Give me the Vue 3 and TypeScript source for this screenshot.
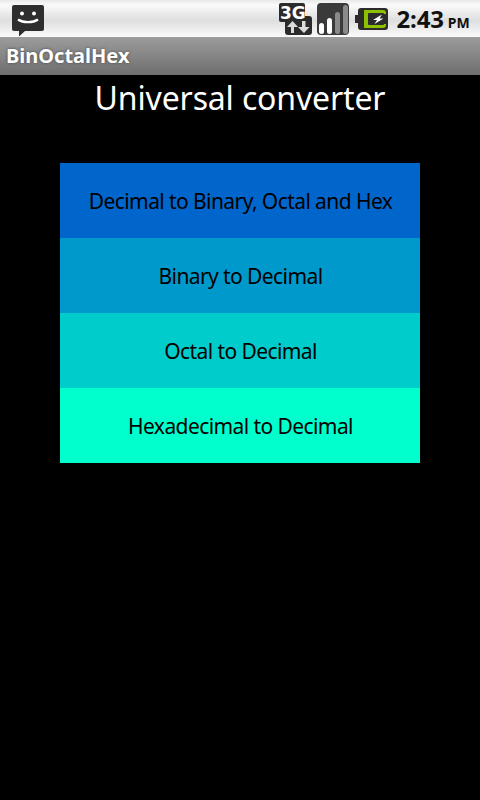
<script setup lang="ts">
const rows = [
  { label: 'Decimal to Binary, Octal and Hex', color: '#0066cc' },
  { label: 'Binary to Decimal', color: '#0099cc' },
  { label: 'Octal to Decimal', color: '#00cccc' },
  { label: 'Hexadecimal to Decimal', color: '#00ffcc' },
]
</script>

<template>
  <div class="screen">
    <header class="status">
      <svg class="smile" width="34" height="36" viewBox="0 0 34 36">
        <path d="M3 4h28a2 2 0 0 1 2 2v22a2 2 0 0 1-2 2H14l-6 5.500V30H3a2 2 0 0 1-2-2V6a2 2 0 0 1 2-2z" fill="#2e2e2e" />
        <circle cx="11" cy="12.500" r="2" fill="#fff" />
        <circle cx="23" cy="12.500" r="2" fill="#fff" />
        <path d="M7 18.500c5 3.500 15 3.500 20 0" fill="none" stroke="#fff" stroke-width="2.400" />
      </svg>
      <div class="spacer"></div>
      <svg class="net" width="33" height="34" viewBox="0 0 33 34">
        <rect x="6" y="14" width="27" height="19" rx="3" fill="#2b2b2b" />
        <rect x="0" y="1" width="26" height="19" rx="2" fill="#2b2b2b" />
        <text x="1" y="17" class="net-label">3G</text>
        <path d="M12 31v-6H8l5.500-6 5.500 6h-4v6zM23 19h3.500v6h4L25 31l-6-6h4z" fill="#dcdcdc" />
      </svg>
      <svg class="bars" width="32" height="32" viewBox="0 0 32 32">
        <rect width="32" height="32" rx="4" fill="#3a3a3a" />
        <rect x="2" y="20" width="5" height="11" rx="2.500" fill="#fff" />
        <rect x="10" y="15" width="5" height="16" rx="2.500" fill="#fff" />
        <rect x="18" y="9" width="5" height="22" rx="2.500" fill="#8a8a8a" />
        <rect x="26" y="2" width="5" height="29" rx="2.500" fill="#8a8a8a" />
      </svg>
      <svg class="batt" width="33" height="24" viewBox="0 0 33 24">
        <path d="M6 1h24a3 3 0 0 1 3 3v16a3 3 0 0 1-3 3H6a3 3 0 0 1-3-3v-4H0V8h3V4a3 3 0 0 1 3-3z" fill="#2b2b2b" />
        <path d="M9 3h19a3 3 0 0 1 3 3v1H15v10h16v1a3 3 0 0 1-3 3H9z" fill="#8cc000" />
        <rect x="13" y="6" width="16" height="12" rx="1" fill="#2b2b2b" />
        <path d="M27 7.500l-9 5.500h4l-2.500 4 9-5.500h-4z" fill="#fff" />
      </svg>
      <div class="clock">2:43<span class="ampm">PM</span></div>
    </header>
    <div class="titlebar">BinOctalHex</div>
    <h1 class="heading">Universal converter</h1>
    <div class="list">
      <div v-for="r in rows" :key="r.label" class="row" :style="{ background: r.color }">{{ r.label }}</div>
    </div>
  </div>
</template>

<style scoped>
.screen {
  width: 480px;
  height: 800px;
  background: #000;
  overflow: hidden;
  font-family: "Noto Sans", "Open Sans", sans-serif;
}
.status {
  height: 37px;
  background: linear-gradient(#e9e9e9, #fafafa 14%, #dedede 55%, #fbfbfb);
  display: flex;
  align-items: center;
  padding: 0 10px 0 11px;
  box-sizing: border-box;
}
.spacer { flex: 1; }
.net-label {
  font-family: "DejaVu Sans", sans-serif;
  font-size: 17px;
  font-weight: 700;
  fill: #fff;
}
.bars { margin-left: 5px; }
.batt { margin-left: 6px; }
.clock {
  margin-left: 9px;
  font-size: 24px;
  font-weight: 700;
  letter-spacing: -0.2px;
  color: #111;
  white-space: nowrap;
}
.ampm { font-size: 14px; margin-left: 4px; letter-spacing: 0.2px; }
.titlebar {
  height: 38px;
  line-height: 37px;
  padding-left: 6px;
  box-sizing: border-box;
  background: linear-gradient(#9c9c9c, #6e6e6e);
  color: #fff;
  font-size: 20px;
  font-weight: 700;
  text-shadow: 0 0 3px #444;
}
.heading {
  margin: 0;
  height: 88px;
  padding-top: 1px;
  box-sizing: border-box;
  text-align: center;
  font-size: 32px;
  line-height: 44px;
  font-weight: 400;
  letter-spacing: -0.15px;
  color: #fff;
}
.list {
  margin: 0 60px;
  display: flex;
  flex-direction: column;
}
.row {
  height: 75px;
  padding-left: 1px;
  box-sizing: border-box;
  display: flex;
  align-items: center;
  justify-content: center;
  color: #000;
  font-size: 21px;
  letter-spacing: -0.58px;
  white-space: nowrap;
}
</style>
